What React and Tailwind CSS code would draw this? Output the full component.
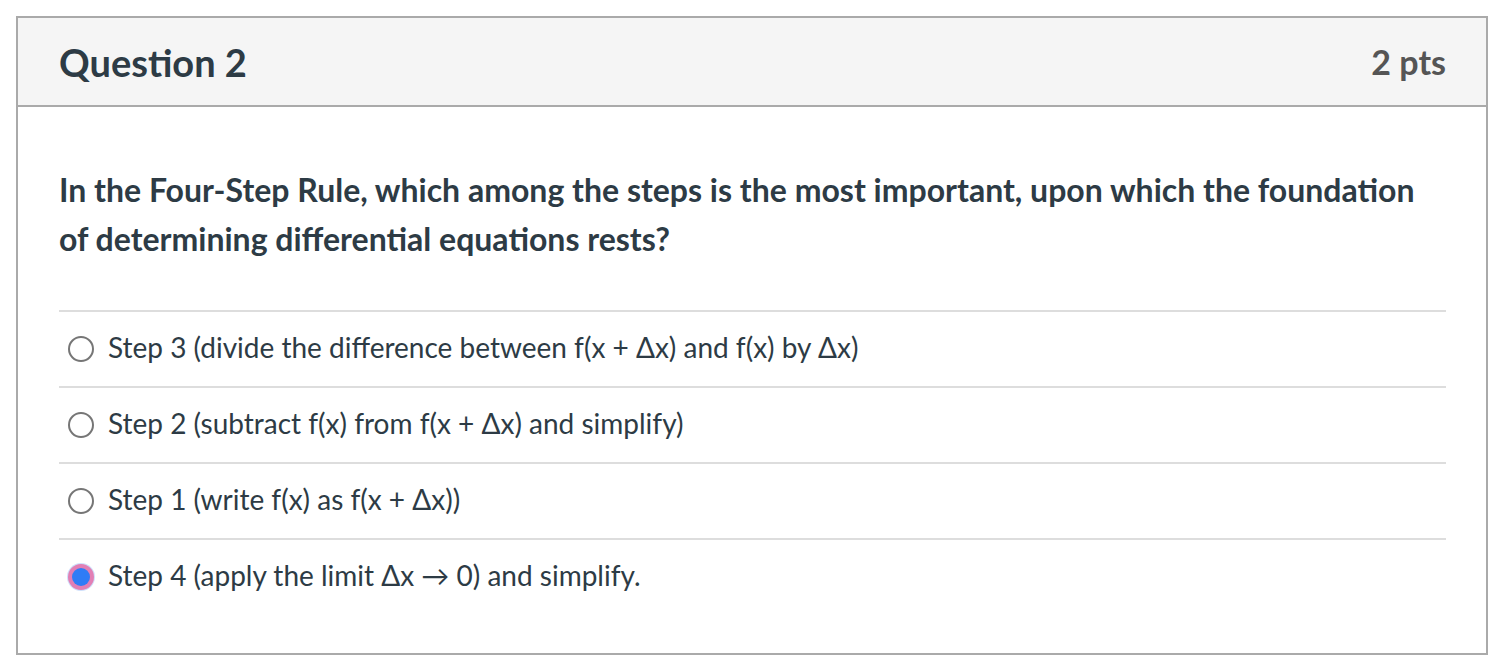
const answers = [
  { id: 'a1', text: 'Step 3 (divide the difference between f(x + Δx) and f(x) by Δx)' },
  { id: 'a2', text: 'Step 2 (subtract f(x) from f(x + Δx) and simplify)' },
  { id: 'a3', text: 'Step 1 (write f(x) as f(x + Δx))' },
  { id: 'a4', text: 'Step 4 (apply the limit Δx → 0) and simplify.', selected: true },
];

function Radio({ selected }) {
  if (selected) {
    return (
      <span className="flex-shrink-0 w-[26px] h-[26px] rounded-full flex items-center justify-center bg-[#e27fb5] ring-1 ring-[#cfe0fb]">
        <span className="w-[18px] h-[18px] rounded-full bg-[#2f7cf6]" />
      </span>
    );
  }
  return <span className="flex-shrink-0 w-[26px] h-[26px] rounded-full border-2 border-[#767676] bg-white" />;
}

export default function App() {
  return (
    <div className="min-h-screen bg-white pt-4 pl-4 pr-[10px] font-['Lato','Noto_Sans',sans-serif] text-[#2d3b45]">
      <div className="border-2 border-[#aaaaaa] bg-white">
        {/* Header */}
        <div className="flex items-center justify-between h-[89px] pl-[41px] pr-[40px] bg-[#f5f5f5] border-b-2 border-[#aaaaaa]">
          <h2 className="text-[38px] font-bold leading-none">Question 2</h2>
          <span className="text-[34px] font-bold text-[#555555] leading-none">2 pts</span>
        </div>

        {/* Body */}
        <div className="pl-[41px] pr-[40px] pt-[58px] pb-[39px]">
          <p className="text-[32px] font-bold leading-[49px]">
            In the Four-Step Rule, which among the steps is the most important, upon which the foundation of determining differential equations rests?
          </p>

          <div className="mt-[47px]">
            {answers.map((a) => (
              <div key={a.id} className="flex items-center gap-[14px] h-[76px] pl-[9px] border-t-2 border-[#dddddd]">
                <Radio selected={a.selected} />
                <span className="text-[28px] leading-none -mt-[5px]">{a.text}</span>
              </div>
            ))}
          </div>
        </div>
      </div>
    </div>
  );
}
